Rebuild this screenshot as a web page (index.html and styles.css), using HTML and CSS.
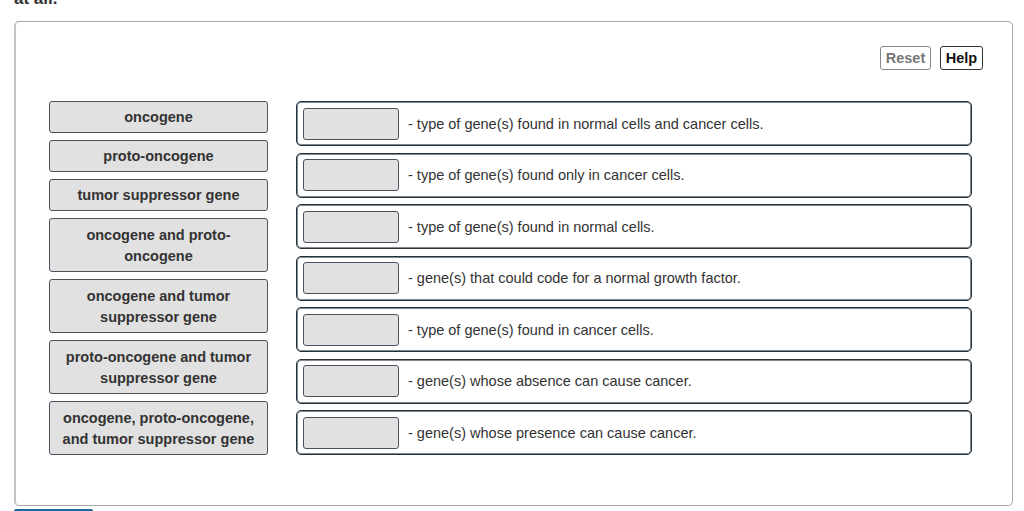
FILE: index.html
```html
<!DOCTYPE html>
<html>
<head>
<meta charset="utf-8">
<link rel="stylesheet" href="styles.css">
</head>
<body>
<p class="lead">at all.</p>
<div class="panel">
  <div class="toolbar">
    <button class="btn btn-reset">Reset</button>
    <button class="btn btn-help">Help</button>
  </div>
  <div class="content">
    <div class="items">
      <div class="item">oncogene</div>
      <div class="item">proto-oncogene</div>
      <div class="item">tumor suppressor gene</div>
      <div class="item two">oncogene and proto-<br>oncogene</div>
      <div class="item two">oncogene and tumor<br>suppressor gene</div>
      <div class="item two">proto-oncogene and tumor<br>suppressor gene</div>
      <div class="item two">oncogene, proto-oncogene,<br>and tumor suppressor gene</div>
    </div>
    <div class="targets">
      <div class="row"><div class="drop"></div><span>- type of gene(s) found in normal cells and cancer cells.</span></div>
      <div class="row"><div class="drop"></div><span>- type of gene(s) found only in cancer cells.</span></div>
      <div class="row"><div class="drop"></div><span>- type of gene(s) found in normal cells.</span></div>
      <div class="row"><div class="drop"></div><span>- gene(s) that could code for a normal growth factor.</span></div>
      <div class="row"><div class="drop"></div><span>- type of gene(s) found in cancer cells.</span></div>
      <div class="row"><div class="drop"></div><span>- gene(s) whose absence can cause cancer.</span></div>
      <div class="row"><div class="drop"></div><span>- gene(s) whose presence can cause cancer.</span></div>
    </div>
  </div>
</div>
<div class="bluebar"></div>
</body>
</html>
```
FILE: styles.css
```css
html, body {
  margin: 0;
  padding: 0;
  background: #ffffff;
  font-family: "Liberation Sans", Arial, sans-serif;
  overflow: hidden;
}
.lead {
  margin: -10px 0 0 14px;
  height: 16px;
  font-size: 17px;
  font-weight: bold;
  color: #333;
  line-height: 18px;
}
.panel {
  margin: 15px 0 0 14px;
  width: 996px;
  height: 483px;
  border: 1px solid #a8a8a8;
  border-left: 2px solid #c4c4c4;
  border-radius: 5px;
  box-sizing: content-box;
  position: relative;
}
.toolbar {
  display: flex;
  justify-content: flex-end;
  gap: 9px;
  padding: 24px 29px 0 0;
  height: 24px;
}
.btn {
  font-family: "Liberation Sans", Arial, sans-serif;
  font-size: 14.5px;
  font-weight: bold;
  background: #fff;
  border-radius: 3px;
  height: 24px;
  padding: 0 3px;
  line-height: 20px;
  margin: 0;
}
.btn-reset {
  color: #777;
  border: 1px solid #888;
  width: 51px;
}
.btn-help {
  color: #111;
  border: 1px solid #333;
  width: 43px;
}
.content {
  display: flex;
  gap: 28px;
  padding: 31px 0 0 33px;
}
.items {
  width: 219px;
  display: flex;
  flex-direction: column;
  gap: 7px;
}
.item {
  box-sizing: border-box;
  height: 32px;
  background: #e1e1e1;
  border: 1px solid #4c4f5c;
  border-radius: 3px;
  font-size: 14.5px;
  font-weight: bold;
  color: #333;
  text-align: center;
  display: flex;
  align-items: center;
  justify-content: center;
  line-height: 21px;
  padding-top: 1px;
  white-space: nowrap;
}
.item.two {
  height: 54px;
}
.targets {
  width: 676px;
  display: flex;
  flex-direction: column;
  gap: 6.5px;
}
.row {
  box-sizing: border-box;
  height: 45px;
  border: 1px solid #24303a;
  border-radius: 5px;
  box-shadow: inset 0 0 0 1px #7f898f;
  display: flex;
  align-items: center;
  padding-left: 6px;
  font-size: 14.5px;
  color: #333;
}
.drop {
  box-sizing: border-box;
  width: 96px;
  height: 32px;
  background: #e1e1e1;
  border: 1px solid #4c4f5c;
  border-radius: 3px;
  margin-right: 9px;
  flex: none;
}
.bluebar {
  margin: 3px 0 0 14px;
  width: 79px;
  height: 3px;
  background: #1e66a3;
  border-radius: 2px 2px 0 0;
}
```
